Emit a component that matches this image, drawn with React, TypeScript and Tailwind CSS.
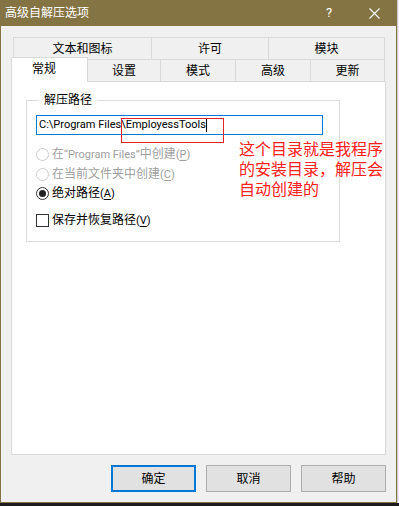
import React from 'react';

const ui = { fontFamily: 'Roboto, "Noto Sans CJK SC", sans-serif' };

const Key = ({ k }: { k: string }) => (
  <span className="text-[11px]">
    (<span className="underline underline-offset-2">{k}</span>)
  </span>
);

const Radio = ({ checked, disabled, label }: { checked?: boolean; disabled?: boolean; label: React.ReactNode }) => (
  <div className={`flex items-center h-[19px] ${disabled ? 'text-[#a0a0a0]' : 'text-black'}`}>
    <span
      className={`w-[13px] h-[13px] rounded-full border flex items-center justify-center bg-white ${
        disabled ? 'border-[#cccccc]' : 'border-[#333333]'
      }`}
    >
      {checked && <span className="w-[7px] h-[7px] rounded-full bg-[#222222]" />}
    </span>
    <span className="ml-[3px]">{label}</span>
  </div>
);

const App = () => {
  const backTabs = [
    { t: '文本和图标', w: 139 },
    { t: '许可', w: 117 },
    { t: '模块', w: 116 },
  ];
  const frontTabs = [
    { t: '设置', w: 73 },
    { t: '模式', w: 75 },
    { t: '高级', w: 75 },
    { t: '更新', w: 74 },
  ];

  return (
    <div className="w-[399px] h-[506px] bg-[#1c1c1c] text-[12px] overflow-hidden" style={ui}>
      <div className="flex h-[503px]">
        <div className="w-[397px] h-[503px] flex flex-col border-x border-b border-[#857443]">
          {/* title bar */}
          <div className="h-[26px] bg-[#857443] flex items-center text-white shrink-0">
            <span className="ml-[4px] flex-1">高级自解压选项</span>
            <span className="w-[46px] text-center text-[13px] pl-[4px]">?</span>
            <span className="w-[46px] flex justify-center pl-[2px]">
              <svg width="11" height="11" viewBox="0 0 11 11">
                <path d="M0.5 0.5 L10.5 10.5 M10.5 0.5 L0.5 10.5" stroke="white" strokeWidth="1.1" />
              </svg>
            </span>
          </div>

          {/* body */}
          <div className="flex-1 bg-[#f0f0f0] pt-[11px] px-[10px] flex flex-col">
            {/* back tab row */}
            <div className="flex ml-[2px] h-[22px]">
              {backTabs.map((b, i) => (
                <div
                  key={b.t}
                  className={`h-[22px] border-t border-r border-[#d9d9d9] flex items-center justify-center ${
                    i === 0 ? 'border-l' : ''
                  }`}
                  style={{ width: b.w }}
                >
                  {b.t}
                </div>
              ))}
            </div>
            {/* front tab row */}
            <div className="flex h-[22px] relative z-10">
              <div className="w-[77px] h-[25px] -mt-[2px] bg-white border-t border-x border-[#d9d9d9] flex items-start pt-[2px] pl-[20px]">
                常规
              </div>
              {frontTabs.map((b) => (
                <div
                  key={b.t}
                  className="h-[22px] border-t border-r border-[#d9d9d9] flex items-center justify-center"
                  style={{ width: b.w }}
                >
                  {b.t}
                </div>
              ))}
            </div>

            {/* panel */}
            <div className="h-[374px] w-[375px] bg-white border border-[#d9d9d9] relative pt-[12px] pl-[14px]">
              <fieldset className="w-[314px] h-[149px] border border-[#dcdcdc] pl-[9px] -mt-[1px]">
                <legend className="ml-[3px] px-[5px] leading-[15px]">解压路径</legend>
                <div className="w-[287px] h-[20px] border border-[#0078d7] flex items-center pl-[2px] mt-[7px] text-black text-[11px]">
                  <span>C:\Program Files\EmployessTools</span>
                  <span className="w-px h-[14px] bg-black" />
                </div>
                <div className="mt-[10px]">
                  <Radio
                    disabled
                    label={
                      <>
                        在<span className="text-[11px]">“Program Files”</span>中创建<Key k="P" />
                      </>
                    }
                  />
                  <div className="h-px" />
                  <Radio disabled label={<>在当前文件夹中创建<Key k="C" /></>} />
                  <Radio checked label={<>绝对路径<Key k="A" /></>} />
                </div>
                <div className="flex items-center h-[19px] mt-[8px]">
                  <span className="w-[13px] h-[13px] border border-[#333333] bg-white" />
                  <span className="ml-[3px]">
                    保存并恢复路径<Key k="V" />
                  </span>
                </div>
              </fieldset>

              {/* annotation overlays */}
              <div className="absolute left-[109px] top-[36px] w-[103px] h-[25px] border border-[#e0242a]" />
              <div
                className="absolute left-[227px] top-[56px] w-[150px] text-[16px] leading-[20px] text-[#ff2020]"
                style={{ fontFamily: '"Noto Sans CJK SC", sans-serif' }}
              >
                这个目录就是我程序的安装目录，解压会自动创建的
              </div>
            </div>

            {/* buttons */}
            <div className="flex justify-end gap-[10px] mt-[10px]">
              <button className="w-[85px] h-[27px] bg-[#e1e1e1] border-2 border-[#0078d7]">确定</button>
              <button className="w-[85px] h-[27px] bg-[#e1e1e1] border border-[#adadad]">取消</button>
              <button className="w-[85px] h-[27px] bg-[#e1e1e1] border border-[#adadad]">帮助</button>
            </div>
          </div>
        </div>
        <div className="flex-1 bg-[#ececec] border-l border-[#cfcfcf]" />
      </div>
    </div>
  );
};

export default App;
